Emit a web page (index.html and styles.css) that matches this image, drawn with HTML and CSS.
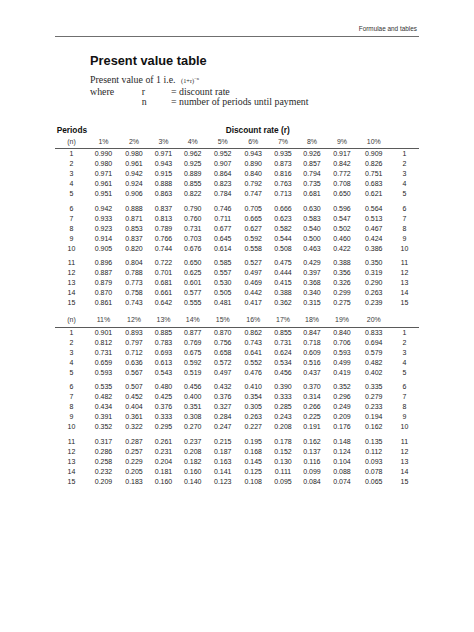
FILE: index.html
```html
<!DOCTYPE html>
<html lang="en">
<head>
<meta charset="utf-8">
<title>Present value table</title>
<link rel="stylesheet" href="styles.css">
</head>
<body>
<div class="page">
  <div class="running-head">Formulae and tables</div>
  <h1 class="title">Present value table</h1>
  <div class="intro">
    <div>Present value of 1 i.e. <span class="formula">(1+r)<sup>−n</sup></span></div>
    <div class="def"><span>where</span><span>r</span><span>= discount rate</span></div>
    <div class="def"><span></span><span>n</span><span>= number of periods until payment</span></div>
  </div>
  <div class="caption-row"><span class="periods">Periods</span><span>Discount rate (r)</span></div>

  <div class="table">
    <div class="trow head"><span>(n)</span><span>1%</span><span>2%</span><span>3%</span><span>4%</span><span>5%</span><span>6%</span><span>7%</span><span>8%</span><span>9%</span><span>10%</span><span></span></div>
    <div class="trow"><span>1</span><span>0.990</span><span>0.980</span><span>0.971</span><span>0.962</span><span>0.952</span><span>0.943</span><span>0.935</span><span>0.926</span><span>0.917</span><span>0.909</span><span>1</span></div>
    <div class="trow"><span>2</span><span>0.980</span><span>0.961</span><span>0.943</span><span>0.925</span><span>0.907</span><span>0.890</span><span>0.873</span><span>0.857</span><span>0.842</span><span>0.826</span><span>2</span></div>
    <div class="trow"><span>3</span><span>0.971</span><span>0.942</span><span>0.915</span><span>0.889</span><span>0.864</span><span>0.840</span><span>0.816</span><span>0.794</span><span>0.772</span><span>0.751</span><span>3</span></div>
    <div class="trow"><span>4</span><span>0.961</span><span>0.924</span><span>0.888</span><span>0.855</span><span>0.823</span><span>0.792</span><span>0.763</span><span>0.735</span><span>0.708</span><span>0.683</span><span>4</span></div>
    <div class="trow"><span>5</span><span>0.951</span><span>0.906</span><span>0.863</span><span>0.822</span><span>0.784</span><span>0.747</span><span>0.713</span><span>0.681</span><span>0.650</span><span>0.621</span><span>5</span></div>
    <div class="trow group"><span>6</span><span>0.942</span><span>0.888</span><span>0.837</span><span>0.790</span><span>0.746</span><span>0.705</span><span>0.666</span><span>0.630</span><span>0.596</span><span>0.564</span><span>6</span></div>
    <div class="trow"><span>7</span><span>0.933</span><span>0.871</span><span>0.813</span><span>0.760</span><span>0.711</span><span>0.665</span><span>0.623</span><span>0.583</span><span>0.547</span><span>0.513</span><span>7</span></div>
    <div class="trow"><span>8</span><span>0.923</span><span>0.853</span><span>0.789</span><span>0.731</span><span>0.677</span><span>0.627</span><span>0.582</span><span>0.540</span><span>0.502</span><span>0.467</span><span>8</span></div>
    <div class="trow"><span>9</span><span>0.914</span><span>0.837</span><span>0.766</span><span>0.703</span><span>0.645</span><span>0.592</span><span>0.544</span><span>0.500</span><span>0.460</span><span>0.424</span><span>9</span></div>
    <div class="trow"><span>10</span><span>0.905</span><span>0.820</span><span>0.744</span><span>0.676</span><span>0.614</span><span>0.558</span><span>0.508</span><span>0.463</span><span>0.422</span><span>0.386</span><span>10</span></div>
    <div class="trow group"><span>11</span><span>0.896</span><span>0.804</span><span>0.722</span><span>0.650</span><span>0.585</span><span>0.527</span><span>0.475</span><span>0.429</span><span>0.388</span><span>0.350</span><span>11</span></div>
    <div class="trow"><span>12</span><span>0.887</span><span>0.788</span><span>0.701</span><span>0.625</span><span>0.557</span><span>0.497</span><span>0.444</span><span>0.397</span><span>0.356</span><span>0.319</span><span>12</span></div>
    <div class="trow"><span>13</span><span>0.879</span><span>0.773</span><span>0.681</span><span>0.601</span><span>0.530</span><span>0.469</span><span>0.415</span><span>0.368</span><span>0.326</span><span>0.290</span><span>13</span></div>
    <div class="trow"><span>14</span><span>0.870</span><span>0.758</span><span>0.661</span><span>0.577</span><span>0.505</span><span>0.442</span><span>0.388</span><span>0.340</span><span>0.299</span><span>0.263</span><span>14</span></div>
    <div class="trow"><span>15</span><span>0.861</span><span>0.743</span><span>0.642</span><span>0.555</span><span>0.481</span><span>0.417</span><span>0.362</span><span>0.315</span><span>0.275</span><span>0.239</span><span>15</span></div>
  </div>

  <div class="table table-second">
    <div class="trow head"><span>(n)</span><span>11%</span><span>12%</span><span>13%</span><span>14%</span><span>15%</span><span>16%</span><span>17%</span><span>18%</span><span>19%</span><span>20%</span><span></span></div>
    <div class="trow"><span>1</span><span>0.901</span><span>0.893</span><span>0.885</span><span>0.877</span><span>0.870</span><span>0.862</span><span>0.855</span><span>0.847</span><span>0.840</span><span>0.833</span><span>1</span></div>
    <div class="trow"><span>2</span><span>0.812</span><span>0.797</span><span>0.783</span><span>0.769</span><span>0.756</span><span>0.743</span><span>0.731</span><span>0.718</span><span>0.706</span><span>0.694</span><span>2</span></div>
    <div class="trow"><span>3</span><span>0.731</span><span>0.712</span><span>0.693</span><span>0.675</span><span>0.658</span><span>0.641</span><span>0.624</span><span>0.609</span><span>0.593</span><span>0.579</span><span>3</span></div>
    <div class="trow"><span>4</span><span>0.659</span><span>0.636</span><span>0.613</span><span>0.592</span><span>0.572</span><span>0.552</span><span>0.534</span><span>0.516</span><span>0.499</span><span>0.482</span><span>4</span></div>
    <div class="trow"><span>5</span><span>0.593</span><span>0.567</span><span>0.543</span><span>0.519</span><span>0.497</span><span>0.476</span><span>0.456</span><span>0.437</span><span>0.419</span><span>0.402</span><span>5</span></div>
    <div class="trow group"><span>6</span><span>0.535</span><span>0.507</span><span>0.480</span><span>0.456</span><span>0.432</span><span>0.410</span><span>0.390</span><span>0.370</span><span>0.352</span><span>0.335</span><span>6</span></div>
    <div class="trow"><span>7</span><span>0.482</span><span>0.452</span><span>0.425</span><span>0.400</span><span>0.376</span><span>0.354</span><span>0.333</span><span>0.314</span><span>0.296</span><span>0.279</span><span>7</span></div>
    <div class="trow"><span>8</span><span>0.434</span><span>0.404</span><span>0.376</span><span>0.351</span><span>0.327</span><span>0.305</span><span>0.285</span><span>0.266</span><span>0.249</span><span>0.233</span><span>8</span></div>
    <div class="trow"><span>9</span><span>0.391</span><span>0.361</span><span>0.333</span><span>0.308</span><span>0.284</span><span>0.263</span><span>0.243</span><span>0.225</span><span>0.209</span><span>0.194</span><span>9</span></div>
    <div class="trow"><span>10</span><span>0.352</span><span>0.322</span><span>0.295</span><span>0.270</span><span>0.247</span><span>0.227</span><span>0.208</span><span>0.191</span><span>0.176</span><span>0.162</span><span>10</span></div>
    <div class="trow group"><span>11</span><span>0.317</span><span>0.287</span><span>0.261</span><span>0.237</span><span>0.215</span><span>0.195</span><span>0.178</span><span>0.162</span><span>0.148</span><span>0.135</span><span>11</span></div>
    <div class="trow"><span>12</span><span>0.286</span><span>0.257</span><span>0.231</span><span>0.208</span><span>0.187</span><span>0.168</span><span>0.152</span><span>0.137</span><span>0.124</span><span>0.112</span><span>12</span></div>
    <div class="trow"><span>13</span><span>0.258</span><span>0.229</span><span>0.204</span><span>0.182</span><span>0.163</span><span>0.145</span><span>0.130</span><span>0.116</span><span>0.104</span><span>0.093</span><span>13</span></div>
    <div class="trow"><span>14</span><span>0.232</span><span>0.205</span><span>0.181</span><span>0.160</span><span>0.141</span><span>0.125</span><span>0.111</span><span>0.099</span><span>0.088</span><span>0.078</span><span>14</span></div>
    <div class="trow"><span>15</span><span>0.209</span><span>0.183</span><span>0.160</span><span>0.140</span><span>0.123</span><span>0.108</span><span>0.095</span><span>0.084</span><span>0.074</span><span>0.065</span><span>15</span></div>
  </div>
</div>
</body>
</html>
```
FILE: styles.css
```css
html, body {
  margin: 0;
  padding: 0;
  background: #ffffff;
}

body {
  font-family: "Liberation Sans", Arial, Helvetica, sans-serif;
  color: #1e1e1e;
}

.page {
  width: 363.5px;
  margin-left: 55px;
  padding-top: 25px;
}

.running-head {
  font-size: 6.4px;
  line-height: 8px;
  text-align: right;
  padding-right: 1.5px;
  padding-bottom: 3px;
  border-bottom: 1px solid #6f6f6f;
  color: #333333;
}

.title {
  margin: 15.8px 0 0 35px;
  font-size: 12.8px;
  line-height: 15px;
  font-weight: bold;
  color: #111111;
}

.intro {
  margin: 7.2px 0 0 35px;
  font-family: "Liberation Serif", "Times New Roman", serif;
  font-size: 9.9px;
  line-height: 10.7px;
  color: #2a2a2a;
}

.intro .def {
  display: grid;
  grid-template-columns: 51.7px 29.3px auto;
}

.formula {
  font-size: 6.4px;
  margin-left: 3px;
}

.formula sup {
  font-size: 4.6px;
  vertical-align: 3px;
  line-height: 0;
}

.caption-row {
  margin-top: 16.5px;
  display: flex;
  font-size: 8.3px;
  font-weight: bold;
  line-height: 10px;
  color: #111111;
}

.caption-row .periods {
  box-sizing: border-box;
  width: 170.7px;
  padding-left: 1.7px;
}

.table {
  font-size: 7px;
  line-height: 10px;
}

.trow {
  display: grid;
  grid-template-columns: 33px 31px 30px 29px 29.5px 30.5px 30.5px 29px 29px 31px 32.5px 29px;
  text-align: center;
  white-space: nowrap;
}

.trow.head {
  margin-top: 2.2px;
  padding-bottom: 1.6px;
  border-bottom: 1px solid #5a5a5a;
  color: #3a3a3a;
}

.trow.group {
  margin-top: 4.5px;
}

.table-second {
  margin-top: 6.2px;
}

.table-second .trow.head {
  margin-top: 0;
  padding-bottom: 2px;
}
```
